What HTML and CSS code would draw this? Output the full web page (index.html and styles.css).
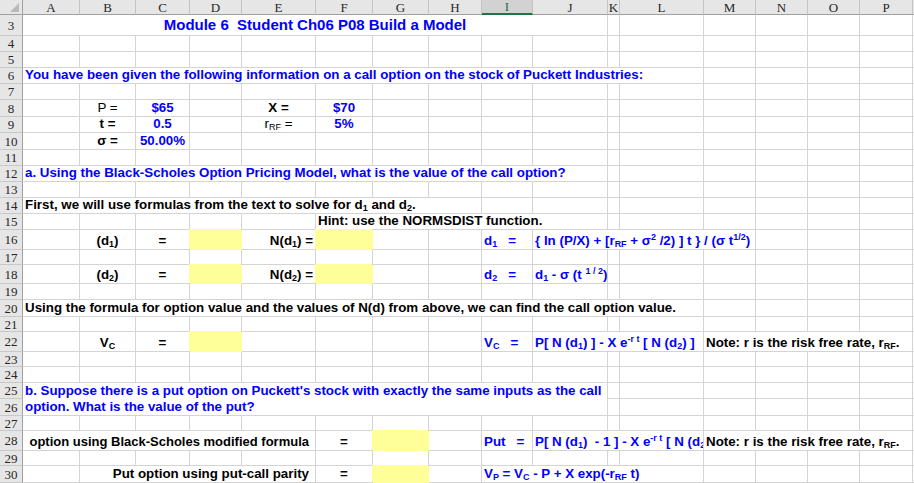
FILE: index.html
```html
<!DOCTYPE html>
<html>
<head>
<meta charset="utf-8">
<title>Module 6 Student Ch06 P08 Build a Model</title>
<link rel="stylesheet" href="styles.css">
</head>
<body>
<div class="sheet">
<span class="ch corner"><svg width="22" height="14" viewBox="0 0 22 14"><polygon points="19,3 19,12 10,12" fill="#b9b9b9"/></svg></span>
<span class="ch">A</span><span class="ch">B</span><span class="ch">C</span><span class="ch">D</span><span class="ch">E</span><span class="ch">F</span><span class="ch">G</span><span class="ch">H</span><span class="ch sel">I</span><span class="ch">J</span><span class="ch">K</span><span class="ch">L</span><span class="ch">M</span><span class="ch">N</span><span class="ch">O</span><span class="ch">P</span><span class="ch last"></span>

<span class="rh">3</span><span class="s10 ctr blue title">Module 6&nbsp; Student Ch06 P08 Build a Model</span><span></span><span></span><span></span><span></span><span></span><span></span><span class="fl"></span>

<span class="rh">4</span><span></span><span></span><span></span><span></span><span></span><span></span><span></span><span></span><span></span><span></span><span></span><span></span><span></span><span></span><span></span><span></span><span class="fl"></span>

<span class="rh">5</span><span></span><span></span><span></span><span></span><span></span><span></span><span></span><span></span><span></span><span></span><span></span><span></span><span></span><span></span><span></span><span></span><span class="fl"></span>

<span class="rh">6</span><span class="s12 blue">You have been given the following information on a call option on the stock of Puckett Industries:</span><span></span><span></span><span></span><span></span><span class="fl"></span>

<span class="rh">7</span><span></span><span></span><span></span><span></span><span></span><span></span><span></span><span></span><span></span><span></span><span></span><span></span><span></span><span></span><span></span><span></span><span class="fl"></span>

<span class="rh">8</span><span></span><span class="ctr reg">P =</span><span class="ctr blue">$65</span><span></span><span class="ctr">X =</span><span class="ctr blue">$70</span><span></span><span></span><span></span><span></span><span></span><span></span><span></span><span></span><span></span><span></span><span class="fl"></span>

<span class="rh">9</span><span></span><span class="ctr">t =</span><span class="ctr blue">0.5</span><span></span><span class="ctr reg"><span class="t">r<sub>RF</sub> =</span></span><span class="ctr blue">5%</span><span></span><span></span><span></span><span></span><span></span><span></span><span></span><span></span><span></span><span></span><span class="fl"></span>

<span class="rh">10</span><span></span><span class="ctr">σ =</span><span class="ctr blue">50.00%</span><span></span><span></span><span></span><span></span><span></span><span></span><span></span><span></span><span></span><span></span><span></span><span></span><span></span><span class="fl"></span>

<span class="rh">11</span><span></span><span></span><span></span><span></span><span></span><span></span><span></span><span></span><span></span><span></span><span></span><span></span><span></span><span></span><span></span><span></span><span class="fl"></span>

<span class="rh">12</span><span class="s10 blue">a. Using the Black-Scholes Option Pricing Model, what is the value of the call option?</span><span></span><span></span><span></span><span></span><span></span><span></span><span class="fl"></span>

<span class="rh">13</span><span></span><span></span><span></span><span></span><span></span><span></span><span></span><span></span><span></span><span></span><span></span><span></span><span></span><span></span><span></span><span></span><span class="fl"></span>

<span class="rh">14</span><span class="s8"><span class="t">First, we will use formulas from the text to solve for d<sub>1</sub> and d<sub>2</sub>.</span></span><span></span><span></span><span></span><span></span><span></span><span></span><span></span><span></span><span class="fl"></span>

<span class="rh">15</span><span></span><span></span><span></span><span></span><span></span><span class="s5">Hint: use the NORMSDIST function.</span><span></span><span></span><span></span><span></span><span></span><span></span><span class="fl"></span>

<span class="rh">16</span><span></span><span class="ctr"><span class="t">(d<sub>1</sub>)</span></span><span class="ctr">=</span><span class="yel"></span><span class="rt"><span class="t">N(d<sub>1</sub>) =</span></span><span class="yel"></span><span></span><span></span><span class="blue"><span class="t">d<sub>1</sub>&nbsp;&nbsp; =</span></span><span class="s4 blue"><span class="t">{ ln (P/X) + [r<sub>RF</sub> + σ<sup>2</sup> /2) ] t } / (σ t<sup>1/2</sup>)</span></span><span></span><span></span><span></span><span class="fl"></span>

<span class="rh">17</span><span></span><span></span><span></span><span></span><span></span><span></span><span></span><span></span><span></span><span></span><span></span><span></span><span></span><span></span><span></span><span></span><span class="fl"></span>

<span class="rh">18</span><span></span><span class="ctr"><span class="t">(d<sub>2</sub>)</span></span><span class="ctr">=</span><span class="yel"></span><span class="rt"><span class="t">N(d<sub>2</sub>) =</span></span><span class="yel"></span><span></span><span></span><span class="blue"><span class="t">d<sub>2</sub>&nbsp;&nbsp; =</span></span><span class="blue"><span class="t">d<sub>1</sub> - σ (t <sup>1 / 2</sup>)</span></span><span></span><span></span><span></span><span></span><span></span><span></span><span class="fl"></span>

<span class="rh">19</span><span></span><span></span><span></span><span></span><span></span><span></span><span></span><span></span><span></span><span></span><span></span><span></span><span></span><span></span><span></span><span></span><span class="fl"></span>

<span class="rh">20</span><span class="s12">Using the formula for option value and the values of N(d) from above, we can find the call option value.</span><span></span><span></span><span></span><span></span><span class="fl"></span>

<span class="rh">21</span><span></span><span></span><span></span><span></span><span></span><span></span><span></span><span></span><span></span><span></span><span></span><span></span><span></span><span></span><span></span><span></span><span class="fl"></span>

<span class="rh">22</span><span></span><span class="ctr"><span class="t">V<sub>C</sub></span></span><span class="ctr">=</span><span class="yel"></span><span></span><span></span><span></span><span></span><span class="blue"><span class="t">V<sub>C</sub>&nbsp;&nbsp; =</span></span><span class="s3 blue"><span class="t">P[ N (d<sub>1</sub>) ] - X e<sup>-r t</sup> [ N (d<sub>2</sub>) ]</span></span><span class="s4"><span class="t">Note: r is the risk free rate, r<sub>RF</sub>.</span></span><span class="fl"></span>

<span class="rh">23</span><span></span><span></span><span></span><span></span><span></span><span></span><span></span><span></span><span></span><span></span><span></span><span></span><span></span><span></span><span></span><span></span><span class="fl"></span>

<span class="rh">24</span><span></span><span></span><span></span><span></span><span></span><span></span><span></span><span></span><span></span><span></span><span></span><span></span><span></span><span></span><span></span><span></span><span class="fl"></span>

<span class="rh">25</span><span class="s10 r2 blue wrap"><span class="t">b. Suppose there is a put option on Puckett's stock with exactly the same inputs as the call<br>option. What is the value of the put?</span></span><span></span><span></span><span></span><span></span><span></span><span></span><span class="fl"></span>

<span class="rh">26</span><span></span><span></span><span></span><span></span><span></span><span></span><span class="fl"></span>

<span class="rh">27</span><span></span><span></span><span></span><span></span><span></span><span></span><span></span><span></span><span></span><span></span><span></span><span></span><span></span><span></span><span></span><span></span><span class="fl"></span>

<span class="rh">28</span><span class="s5 rt pr label28">option using Black-Scholes modified formula</span><span class="ctr">=</span><span class="yel"></span><span></span><span class="blue">Put&nbsp;&nbsp; =</span><span class="s3 blue"><span class="t">P[ N (d<sub>1</sub>)&nbsp; - 1 ] - X e<sup>-r t</sup> [ N (d<sub>2</sub>) ]</span></span><span class="s4"><span class="t">Note: r is the risk free rate, r<sub>RF</sub>.</span></span><span class="fl"></span>

<span class="rh">29</span><span></span><span></span><span></span><span></span><span></span><span></span><span></span><span></span><span></span><span></span><span></span><span></span><span></span><span></span><span></span><span></span><span class="fl"></span>

<span class="rh">30</span><span></span><span class="s4 rt pr">Put option using put-call parity</span><span class="ctr">=</span><span class="yel"></span><span></span><span class="s4 blue"><span class="t">V<sub>P</sub> = V<sub>C</sub> - P + X exp(-r<sub>RF</sub> t)</span></span><span></span><span></span><span></span><span></span><span class="fl"></span>
</div>
</body>
</html>
```

FILE: styles.css
```css
* {
  box-sizing: border-box;
}

body {
  margin: 0;
  background: #ffffff;
  font-family: "Liberation Sans", Arial, sans-serif;
}

.sheet {
  display: grid;
  grid-template-columns: 23px 57px 56px 54px 52px 74px 57px 56px 53px 51px 75px 12px 84px 52px 52px 52px 53px 1fr;
  grid-template-rows: 15px 21px 16px 16px 16px 16px 17px 16px 17px 16px 16px 16px 16px 16px 20px 15px 19px 16px 17px 15px 20px 15px 16px 16px 17px 15px 20px 15px 17px;
  width: 914px;
  height: 483px;
  overflow: hidden;
}

.sheet > span {
  display: flex;
  align-items: flex-end;
  padding: 0 2px 1px 2px;
  border-right: 1px solid #d4d4d4;
  border-bottom: 1px solid #d4d4d4;
  white-space: nowrap;
  overflow: hidden;
  font-size: 13.33px;
  font-weight: bold;
  line-height: 15px;
  color: #000000;
}

.sheet > .ch {
  align-items: center;
  justify-content: center;
  padding: 0;
  background: #e6e6e6;
  border-right: 1px solid #c3c3c3;
  border-bottom: 1px solid #a0a0a0;
  font-family: "Liberation Serif", "Times New Roman", serif;
  font-weight: normal;
  font-size: 13px;
  color: #262626;
}

.sheet > .ch.corner {
  align-items: stretch;
  border-right: 1px solid #a0a0a0;
}

.sheet > .ch.sel {
  background: #d2d2d2;
  color: #217346;
  border-bottom: 2px solid #217346;
}

.sheet > .ch.last {
  border-right: none;
}

.sheet > .rh {
  align-items: center;
  justify-content: center;
  padding: 0;
  background: #e6e6e6;
  border-right: 1px solid #a0a0a0;
  border-bottom: 1px solid #c8c8c8;
  font-family: "Liberation Serif", "Times New Roman", serif;
  font-weight: normal;
  font-size: 13px;
  color: #262626;
}

.sheet > .fl {
  border-right: none;
}

.sheet > .title {
  font-size: 15px;
  line-height: 18px;
}

.sheet > .ctr {
  justify-content: center;
}

.sheet > .rt {
  justify-content: flex-end;
}

.sheet > .pr {
  padding-right: 6px;
}

.sheet > .label28 {
  font-size: 13px;
}

.sheet > .blue {
  color: #0000ff;
}

.sheet > .reg {
  font-weight: normal;
}

.sheet > .yel {
  background: #ffff99;
  border-right-color: #ffff99;
  border-bottom-color: #ffff99;
  box-shadow: -1px -1px 0 #ffff99;
}

.sheet > .wrap {
  line-height: 16px;
  padding-bottom: 0;
}

.s3 { grid-column: span 3; }
.s4 { grid-column: span 4; }
.s5 { grid-column: span 5; }
.s8 { grid-column: span 8; }
.s10 { grid-column: span 10; }
.s12 { grid-column: span 12; }
.r2 { grid-row: span 2; }

.t {
  display: inline;
}

sub {
  font-size: 9px;
  line-height: 0;
  vertical-align: -2px;
}

sup {
  font-size: 9px;
  line-height: 0;
  vertical-align: 5px;
}
```
